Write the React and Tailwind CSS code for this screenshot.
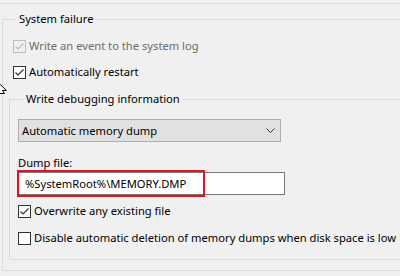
import React from 'react';

const Check = ({ checked, disabled }) => (
  <span
    className={
      'w-[13px] h-[13px] shrink-0 border flex items-center justify-center ' +
      (disabled ? 'border-[#bcbcbc] bg-[#f0f0f0]' : 'border-[#333333] bg-white')
    }
  >
    {checked && (
      <svg width="11" height="11" viewBox="0 0 11 11">
        <path
          d="M1.5 5.5 L4 8 L9.5 2.5"
          fill="none"
          stroke={disabled ? '#bcbcbc' : '#333333'}
          strokeWidth="1.2"
        />
      </svg>
    )}
  </span>
);

const CheckRow = ({ label, checked, disabled, className = '' }) => (
  <div className={'flex items-center gap-[3px] h-[16px] ' + className}>
    <Check checked={checked} disabled={disabled} />
    <span className={'whitespace-nowrap ' + (disabled ? 'text-[#6d6d6d]' : 'text-black')}>{label}</span>
  </div>
);

export default function App() {
  return (
    <div className="relative w-[400px] h-[276px] overflow-hidden bg-[#f0f0f0] text-[11.2px] leading-[16px] text-black font-['Segoe_UI','Noto_Sans',sans-serif]">
      <div className="mt-[3px] border-t border-[#dcdcdc]" />

      {/* System failure */}
      <fieldset className="ml-[2px] mt-[7px] w-[420px] border border-[#dcdcdc] pl-[10px]">
        <legend className="ml-[3px] px-[3px]">System failure</legend>
        <CheckRow className="mt-[11px]" label="Write an event to the system log" checked disabled />
        <CheckRow className="mt-[10px]" label="Automatically restart" checked />

        {/* Write debugging information */}
        <fieldset className="-ml-[4px] mt-[11px] mb-[10px] border border-[#dcdcdc] pl-[8px] pb-[13px]">
          <legend className="ml-[5px] px-[3px]">Write debugging information</legend>

          <div className="mt-[12px] w-[263px] h-[23px] border border-[#adadad] bg-[#e1e1e1] flex items-center justify-between pl-[3px] pr-[5px]">
            <span>Automatic memory dump</span>
            <svg width="9" height="5" viewBox="0 0 9 5">
              <path d="M0.5 0.5 L4.5 4.5 L8.5 0.5" fill="none" stroke="#333333" strokeWidth="1" />
            </svg>
          </div>

          <div className="mt-[13px]">Dump file:</div>
          <div className="relative mt-[1px] w-[267px] h-[23px] border border-[#7a7a7a] bg-white flex items-center pl-[6px]">
            <span>%SystemRoot%\MEMORY.DMP</span>
            <div className="absolute -left-[2px] -top-[3px] w-[188px] h-[27px] border-[2px] border-[#e81123]" />
          </div>

          <CheckRow className="mt-[8px]" label="Overwrite any existing file" checked />
          <CheckRow className="mt-[11px]" label="Disable automatic deletion of memory dumps when disk space is low" />
        </fieldset>
      </fieldset>

      {/* mouse pointer, partly off screen */}
      <svg className="absolute left-0 top-[81px]" width="8" height="13" viewBox="0 0 8 13">
        <path d="M-3 0.5 L6.5 9.5 L2.5 9.5 L4.5 12.5 L-3 12.5 Z" fill="#ffffff" stroke="#000000" strokeWidth="1" />
      </svg>
    </div>
  );
}
